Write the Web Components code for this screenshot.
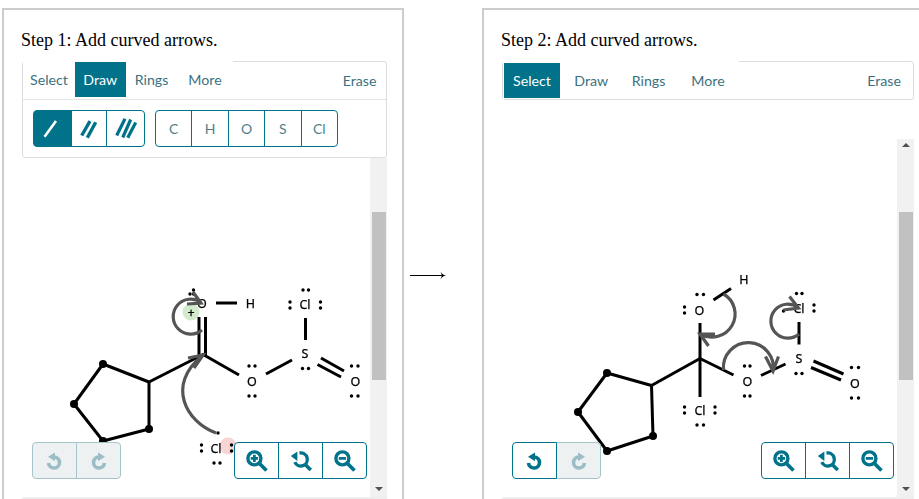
<!DOCTYPE html>
<html>
<head>
<meta charset="utf-8">
<title>Add curved arrows</title>
<style>
  html, body { margin: 0; height: 499px; overflow: hidden; background: #fff; }
  #page { display: flex; align-items: flex-start; padding: 8px 0 0 2px; width: 960px; }
</style>
</head>
<body>
<div id="page">
  <step-panel style="width: 402px">
    <span slot="title">Step 1: Add curved arrows.</span>
    <sketch-toolbar active="Draw" pads="7 7,8.5 8.5,9 10.5,9.5 10" style="--tab-top: 1px; --erase-pad: 9.5px">
      <tool-group style="width: 112px">
        <tool-button pressed style="flex: 38"><tool-icon name="single"></tool-icon></tool-button>
        <tool-button style="flex: 36"><tool-icon name="double"></tool-icon></tool-button>
        <tool-button style="flex: 38"><tool-icon name="triple"></tool-icon></tool-button>
      </tool-group>
      <tool-group style="width: 183px">
        <tool-button label>C</tool-button>
        <tool-button label>H</tool-button>
        <tool-button label>O</tool-button>
        <tool-button label>S</tool-button>
        <tool-button label>Cl</tool-button>
      </tool-group>
    </sketch-toolbar>
    <sketch-canvas molecule="one">
      <tool-group slot="left" style="width: 89px">
        <tool-button disabled><tool-icon name="undo"></tool-icon></tool-button>
        <tool-button disabled><tool-icon name="redo"></tool-icon></tool-button>
      </tool-group>
      <tool-group slot="right" style="width: 133px">
        <tool-button><tool-icon name="zoomin" big></tool-icon></tool-button>
        <tool-button><tool-icon name="reset" big></tool-icon></tool-button>
        <tool-button><tool-icon name="zoomout" big></tool-icon></tool-button>
      </tool-group>
    </sketch-canvas>
  </step-panel>

  <step-arrow></step-arrow>

  <step-panel style="width: 449px">
    <span slot="title">Step 2: Add curved arrows.</span>
    <sketch-toolbar active="Select" pads="9 9,14.5 11,12.5 13,13 13" style="--tab-top: 2px; --tab-left: 1px; --erase-pad: 12px"></sketch-toolbar>
    <sketch-canvas molecule="two" style="margin-top: 39px">
      <tool-group slot="left" style="width: 89px">
        <tool-button><tool-icon name="undo"></tool-icon></tool-button>
        <tool-button disabled><tool-icon name="redo"></tool-icon></tool-button>
      </tool-group>
      <tool-group slot="right" style="width: 133px">
        <tool-button><tool-icon name="zoomin" big></tool-icon></tool-button>
        <tool-button><tool-icon name="reset" big></tool-icon></tool-button>
        <tool-button><tool-icon name="zoomout" big></tool-icon></tool-button>
      </tool-group>
    </sketch-canvas>
  </step-panel>
</div>

<script>
const UI_FONT = `Lato, "Noto Sans", sans-serif`
const TEAL = '#00738a'

// coordinates below are page pixels, the svg viewBox lines them up
const MOLECULES = {
  one: {
    viewBox: '22 158 348 339',
    scrollUp: false,
    halos: [[191, 312, '#d2ebcd'], [228, 446, '#f9d4d4']],
    bonds: [
      [103, 364, 149, 382], [149, 382, 149, 429], [149, 429, 103, 441], [103, 441, 74, 404], [74, 404, 103, 364],
      [149, 382, 204, 354], [204, 355, 239, 375], [199, 317, 199, 355], [205.5, 317, 205.5, 355],
      [216, 303, 237, 303], [266, 374, 292, 360], [305.5, 318, 305.5, 340],
      [321, 358, 344, 371], [317.5, 364.5, 341, 377]
    ],
    nodes: [[103, 364], [74, 404], [149, 429], [103, 441]],
    atoms: [['O', 202, 303], ['H', 250.5, 303], ['Cl', 305, 304], ['S', 305, 353.5], ['O', 252, 381], ['O', 355.5, 381], ['Cl', 216, 448]],
    dots: [
      [303, 290], [308.5, 290], [290, 302], [290, 308], [320.5, 302], [320.5, 308],
      [249, 366], [255, 366], [249, 396], [255, 396], [351.5, 366], [358, 366], [351.5, 396], [358, 396],
      [302.5, 368.5], [308.5, 368.5], [193.5, 290], [190, 294], [193.5, 294],
      [201.5, 445], [201.5, 451], [214, 463], [220, 463], [218, 433], [231.5, 445], [231.5, 451]
    ],
    arrows: [
      'M202 330A17.5 17.5 0 1 1 201 302.5M187 304L201 303L193 292',
      'M216 433C186 422 166 385 202 356M188 358L203 355L194 368'
    ],
    plus: [191, 312]
  },
  two: {
    viewBox: '502 139 395 358',
    scrollUp: true,
    halos: [],
    bonds: [
      [607, 373, 651.5, 385.5], [651.5, 385.5, 653, 436], [653, 436, 607, 451], [607, 451, 578, 412], [578, 412, 607, 373],
      [651.5, 385.5, 700, 358.5], [700, 323, 700, 397], [700, 358.5, 733.5, 375],
      [761, 375.5, 785.5, 364], [799, 322, 799, 344.5],
      [813.5, 361, 843.5, 374], [811, 367.5, 841, 380], [713.5, 300, 731, 288.5]
    ],
    nodes: [[607, 373], [578, 412], [653, 436], [607, 451]],
    atoms: [['H', 744, 279], ['O', 699.5, 310], ['Cl', 799, 308.5], ['S', 799, 358], ['O', 747.5, 381], ['O', 855, 383], ['Cl', 700, 410]],
    dots: [
      [697, 294.5], [703.5, 294.5], [684.5, 307], [684.5, 313],
      [796.5, 293.5], [802, 293.5], [783.5, 311], [814, 305], [814, 311],
      [744.5, 366], [750, 366], [744.5, 396], [750, 396],
      [796, 373.5], [802, 373.5],
      [851.5, 367.5], [858.5, 367.5], [851.5, 398], [858.5, 398],
      [684.5, 407], [684.5, 413], [715, 407], [715, 413], [697, 425], [703.5, 425]
    ],
    arrows: [
      'M723.5 294A23 23 0 1 1 700.5 334M715 334L700 334L708.5 346',
      'M723.5 370A25 25 0 1 1 773 372M765.5 356.5L773 371L778.5 356.5',
      'M799 334A17 17 0 1 1 798 307.5M783.5 310L798.5 308L789.5 296.5'
    ]
  }
}

const line = (d, w) => `<path d="${d}" stroke="currentColor" stroke-width="${w}" fill="none"/>`

const ICONS = {
  single: line('M2.5 17.7L14 2', 2.6),
  double: line('M2.7 16.5L11 2.2M8.3 18.8L16.7 3.2', 3.4),
  triple: line('M.7 16.5L9 -.2M6.7 18.5L14.7 .5M11.7 18.8L19.7 3.5', 3.2),
  undo: line('M9 6A5.5 5.5 0 1 1 3.5 12', 3.6) + '<path d="M10 1.5V10.2L3 5.8Z" fill="currentColor"/>',
  redo: line('M10 6A5.5 5.5 0 1 0 15.5 12', 3.6) + '<path d="M9 1.5V10.2L16 5.8Z" fill="currentColor"/>',
  zoomin: '<circle cx="8" cy="8" r="6.2" stroke="currentColor" stroke-width="3.2" fill="none"/>' +
    line('M8 4.5V11.5M4.5 8H11.5', 2.6) + line('M12.5 12.5L19.5 19.5', 3.4),
  zoomout: '<circle cx="8" cy="8" r="6.2" stroke="currentColor" stroke-width="3.2" fill="none"/>' +
    line('M4.5 8H11.5', 2.6) + line('M12.5 12.5L19.5 19.5', 3.4),
  reset: line('M9 3A6.2 6.2 0 1 1 4.6 11.5', 3.2) + line('M14.5 13.8L19.8 19', 3.4) +
    '<path d="M7 1.5V10.5L.8 5.7Z" fill="currentColor"/>'
}

customElements.define('step-panel',
class extends HTMLElement {
  constructor () {
    super()
    this.attachShadow({ mode: 'open' }).innerHTML = `
      <style>
        :host {
          display: flex;
          flex-direction: column;
          flex: none;
          box-sizing: border-box;
          height: 500px;
          border: 2px solid #ccc;
          padding: 19px 15px 0 18px;
        }
        #title {
          font: 18px/22px "Liberation Serif", serif;
          color: #000;
          margin: 0 0 10px -1px;
        }
        #bar { flex: 1; background: #eee; min-height: 9px; }
      </style>
      <div id="title"><slot name="title"></slot></div>
      <slot></slot>
      <div id="bar"></div>`
  }
})

customElements.define('step-arrow',
class extends HTMLElement {
  constructor () {
    super()
    this.attachShadow({ mode: 'open' }).innerHTML = `
      <style>
        :host {
          display: block;
          flex: none;
          width: 78px;
          height: 491px;
          box-sizing: border-box;
          padding: 262px 0 0 6px;
        }
        svg { display: block; }
      </style>
      <svg width="36" height="11" viewBox="0 0 36 11">
        <path d="M0 5.5H34" stroke="#000" stroke-width="1.2" fill="none"/>
        <path d="M30.5 1.5C31.5 3.5 33 5 36 5.5C33 6 31.5 7.5 30.5 9.5C31 7.5 31.5 6.5 32 5.5C31.5 4.5 31 3.5 30.5 1.5Z" fill="#000"/>
      </svg>`
  }
})

customElements.define('sketch-toolbar',
class extends HTMLElement {
  constructor () {
    super()
    this.attachShadow({ mode: 'open' }).innerHTML = `
      <style>
        :host {
          display: block;
          flex: none;
          box-sizing: border-box;
          border: 1px solid #ddd;
          border-radius: 3px;
          font: 14.2px ${UI_FONT};
          color: #3b7280;
        }
        #top { display: flex; justify-content: space-between; height: 37px; }
        #tabs {
          display: flex;
          box-sizing: border-box;
          background: #fff;
          margin-top: -1px;
          height: 38px;
          padding: var(--tab-top, 1px) 1px 1px var(--tab-left, 0);
        }
        #tabs div { display: flex; align-items: center; height: 35px; }
        #tabs .on { background: ${TEAL}; color: #fff; }
        #erase { display: flex; align-items: center; padding: 0 var(--erase-pad, 10px) 0 0; }
        #tools { display: flex; gap: 10px; padding: 10px; border-top: 1px solid #e4e4e4; }
        #tools.empty { display: none; }
      </style>
      <div id="top">
        <div id="tabs"></div>
        <div id="erase">Erase</div>
      </div>
      <div id="tools"><slot></slot></div>`
  }

  connectedCallback () {
    // pads is "left right" per tab, comma separated
    const pads = this.getAttribute('pads').split(',').map(p => p.split(' '))
    const active = this.getAttribute('active')
    const tabs = this.shadowRoot.querySelector('#tabs')
    ;['Select', 'Draw', 'Rings', 'More'].forEach((name, i) => {
      const tab = document.createElement('div')
      if (name === active) tab.className = 'on'
      tab.style.padding = `0 ${pads[i][1]}px 0 ${pads[i][0]}px`
      tab.textContent = name
      tabs.append(tab)
    })
    // no tools passed in, the toolbar is just the tab row
    if (!this.children.length) this.shadowRoot.querySelector('#tools').className = 'empty'
  }
})

customElements.define('tool-group',
class extends HTMLElement {
  constructor () {
    super()
    this.attachShadow({ mode: 'open' }).innerHTML = `
      <style>
        :host {
          display: flex;
          flex: none;
          box-sizing: border-box;
          height: 37px;
        }
      </style>
      <slot></slot>`
  }
})

customElements.define('tool-button',
class extends HTMLElement {
  constructor () {
    super()
    this.attachShadow({ mode: 'open' }).innerHTML = `
      <style>
        :host {
          display: flex;
          flex: 1;
          align-items: center;
          justify-content: center;
          position: relative;
          z-index: 1;
          box-sizing: border-box;
          border: 1px solid ${TEAL};
          font: 14px ${UI_FONT};
          color: ${TEAL};
          background: #fff;
        }
        :host(:not(:first-child)) { margin-left: -1px; }
        :host(:first-child) { border-radius: 4px 0 0 4px; }
        :host(:last-child) { border-radius: 0 4px 4px 0; }
        :host([label]) { color: #4d7f8c; }
        :host([pressed]) { background: ${TEAL}; color: #fff; }
        :host([disabled]) { z-index: 0; background: #eef1f2; color: #9dbdc6; border-color: #a7c4cb; }
      </style>
      <slot></slot>`
  }
})

customElements.define('tool-icon',
class extends HTMLElement {
  constructor () {
    super()
    this.attachShadow({ mode: 'open' })
  }

  connectedCallback () {
    const size = this.hasAttribute('big') ? 21 : 20
    this.shadowRoot.innerHTML = `
      <style>
        :host { display: block; width: ${size}px; height: ${size}px; margin-right: ${size - 20}px; }
        svg { display: block; overflow: visible; }
      </style>
      <svg width="${size}" height="${size}" viewBox="0 0 20 20">${ICONS[this.getAttribute('name')]}</svg>`
  }
})

customElements.define('sketch-canvas',
class extends HTMLElement {
  constructor () {
    super()
    this.attachShadow({ mode: 'open' }).innerHTML = `
      <style>
        :host {
          display: flex;
          flex: none;
          position: relative;
          height: var(--h, 339px);
        }
        #draw { flex: 1; min-width: 0; }
        svg { display: block; width: 100%; height: 100%; will-change: transform; }
        text {
          font: 12.5px "Noto Sans", sans-serif;
          text-anchor: middle;
          dominant-baseline: central;
          fill: #000;
          stroke: #000;
          stroke-width: .25;
        }
        #left, #right { position: absolute; bottom: 18px; z-index: 2; }
        #left { left: 10px; }
        #right { right: 20px; }
      </style>
      <div id="draw"></div>
      <sketch-scrollbar></sketch-scrollbar>
      <div id="left"><slot name="left"></slot></div>
      <div id="right"><slot name="right"></slot></div>`
  }

  connectedCallback () {
    const m = MOLECULES[this.getAttribute('molecule')]
    if (this.style.marginTop) this.style.setProperty('--h', '358px')
    if (m.scrollUp) this.shadowRoot.querySelector('sketch-scrollbar').setAttribute('up', '')
    const bond = ([a, b, c, d]) => `<line x1="${a}" y1="${b}" x2="${c}" y2="${d}" stroke="#000" stroke-width="3"/>`
    this.shadowRoot.querySelector('#draw').innerHTML = `
      <svg viewBox="${m.viewBox}">
        ${m.halos.map(([x, y, c]) => `<circle cx="${x}" cy="${y}" r="8.5" fill="${c}"/>`).join('')}
        ${m.bonds.map(bond).join('')}
        ${m.nodes.map(([x, y]) => `<circle cx="${x}" cy="${y}" r="4" fill="#000"/>`).join('')}
        ${m.atoms.map(([t, x, y]) => `<text x="${x}" y="${y}">${t}</text>`).join('')}
        ${m.dots.map(([x, y]) => `<circle cx="${x}" cy="${y}" r="1.7" fill="#000"/>`).join('')}
        ${m.plus ? `<text x="${m.plus[0]}" y="${m.plus[1]}">+</text>` : ''}
        ${m.arrows.map(d => `<path d="${d}" fill="none" stroke="#555" stroke-width="3.2"/>`).join('')}
      </svg>`
  }
})

customElements.define('sketch-scrollbar',
class extends HTMLElement {
  constructor () {
    super()
    this.attachShadow({ mode: 'open' }).innerHTML = `
      <style>
        :host {
          display: flex;
          flex-direction: column;
          flex: none;
          box-sizing: border-box;
          width: 17px;
          padding: 0 1px 0 2px;
          background: #f1f1f1;
          position: relative;
        }
        #thumb { flex: none; height: 168px; margin-top: auto; margin-bottom: 117px; background: #c1c1c1; }
        .arrow { position: absolute; left: 5px; border: 4px solid transparent; }
        #up { top: 4px; border-top: 0; border-bottom: 4px solid #505050; display: none; }
        :host([up]) #up { display: block; }
        #down { bottom: 6px; border-bottom: 0; border-top: 4px solid #505050; }
      </style>
      <div class="arrow" id="up"></div>
      <div id="thumb"></div>
      <div class="arrow" id="down"></div>`
  }
})
</script>
</body>
</html>
